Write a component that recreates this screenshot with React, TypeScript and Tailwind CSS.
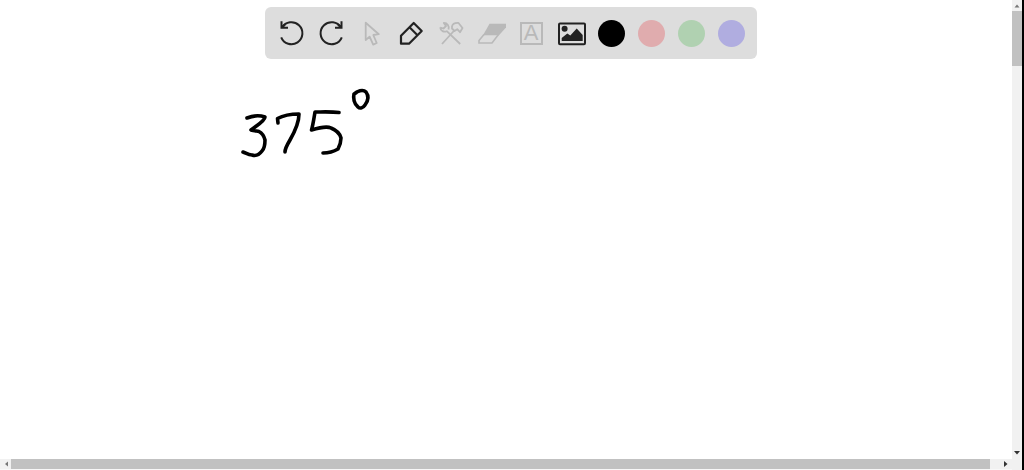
import React from 'react';

type ToolProps = {
  label: string;
  disabled?: boolean;
  children: React.ReactNode;
};

const Tool: React.FC<ToolProps> = ({ label, disabled, children }) => (
  <button
    type="button"
    aria-label={label}
    disabled={disabled}
    className="flex h-10 w-10 items-center justify-center text-[#222222] disabled:text-[#b9b9b9]"
  >
    {children}
  </button>
);

const Icon: React.FC<{ children: React.ReactNode }> = ({ children }) => (
  <svg
    viewBox="0 0 28 28"
    className="h-7 w-7 overflow-visible"
    fill="none"
    stroke="currentColor"
    strokeWidth="2"
    aria-hidden="true"
  >
    {children}
  </svg>
);

const colors = [
  { name: 'Black', swatch: 'bg-black' },
  { name: 'Red', swatch: 'bg-[#e0acae]' },
  { name: 'Green', swatch: 'bg-[#b0d1b1]' },
  { name: 'Blue', swatch: 'bg-[#b0ade0]' },
];

const Toolbar: React.FC = () => (
  <div role="toolbar" aria-label="Whiteboard tools" className="flex rounded-md bg-[#dddddd] p-1.5">
    <Tool label="Undo">
      <Icon>
        <path d="M4.2 18.3A11 11 0 1 0 5 8.5" />
        <path d="M4.5 2.3V8.8H11M4.5 8.8L8 5.5" />
      </Icon>
    </Tool>
    <Tool label="Redo">
      <Icon>
        <path d="M24.8 18.3A11 11 0 1 1 24 8.5" />
        <path d="M24.5 2.3V8.8H18M24.5 8.8L21 5.5" />
      </Icon>
    </Tool>
    <Tool label="Select" disabled>
      <Icon>
        <path
          d="M8.7 3.7V21L12.6 17.6L16.2 25.6L19.7 24L16.3 16L21.8 15.2Z"
          strokeWidth="1.8"
          strokeLinejoin="round"
        />
      </Icon>
    </Tool>
    <Tool label="Pen">
      <Icon>
        <path d="M16.7 4L24.7 12L12 24.7H4V16.7Z" strokeWidth="2.2" strokeLinejoin="round" />
        <path d="M12.5 8.3L20.5 16.3" strokeWidth="2.2" />
      </Icon>
    </Tool>
    <Tool label="Tools" disabled>
      <Icon>
        <path
          d="M3.2 8.5C3.5 12 7 13.5 9.8 12.2L23.2 25M11.5 10.5C12.5 7 10.5 4 6.8 4L9 7L6.5 9.5L3.2 8.5"
          strokeWidth="1.8"
          strokeLinejoin="round"
        />
        <path
          d="M15 7.5C15.5 5 18 3.8 21.5 4L25.5 9L23 13.2L20.2 10.2L17.5 12L15 9.5ZM16.8 12L5 25"
          strokeWidth="1.8"
          strokeLinejoin="round"
        />
      </Icon>
    </Tool>
    <Tool label="Eraser" disabled>
      <Icon>
        <path d="M12.5 4.8H29V8.5L22 16.2H6Z" fill="currentColor" stroke="none" />
        <path d="M7 15.5L2 21.5V24H15L21.5 15.5" strokeWidth="1.6" />
      </Icon>
    </Tool>
    <Tool label="Text" disabled>
      <span className="flex h-[23px] w-[23px] items-center justify-center border-2 border-current font-['Liberation_Sans',sans-serif] text-[22px] leading-none">
        A
      </span>
    </Tool>
    <Tool label="Insert image">
      <Icon>
        <rect x="2" y="4.6" width="26" height="20.6" rx="1" />
        <circle cx="7.6" cy="9.8" r="3" fill="currentColor" stroke="none" />
        <path d="M4.7 22V19L10.3 14.5L13.3 16.5L19.7 9.5L25.7 16V22Z" fill="currentColor" stroke="none" />
      </Icon>
    </Tool>
    {colors.map((color) => (
      <Tool key={color.name} label={color.name}>
        <span className={`h-[27px] w-[27px] rounded-full ${color.swatch}`} />
      </Tool>
    ))}
  </div>
);

// pen strokes on the board, in board coordinates
const strokes = [
  'M247 118C252 116 259 115 265 117C265 121 256 126 251 130C254 131 257 131 259 131.5C262 133 264 136 265 140C265 145 264 149 262 151C259 155 255 156 252 155C248 155 246 153 243 152',
  'M278 123L277.5 118.5C284 115 292 114 299 114C299 122 294 133 290 140C287 145 285 149 285 152',
  'M339 112.5C331 111.5 322 112 315 112C314 118 313 125 311.5 130C318 128 327 126 331 128C336 130 340 134 341 138C341 142 339 147 338 149C333 152 328 153 323 153',
  'M354 94C357 91 363 89 366 92C369 96 368 101 365 105C363 108 360 109 358 107C354 104 353 98 354 94L356 93',
];

const Board: React.FC = () => (
  <svg
    role="img"
    aria-label="375°"
    className="min-h-0 w-full flex-1"
    fill="none"
    stroke="black"
    strokeWidth="3.6"
    strokeLinecap="round"
    strokeLinejoin="round"
  >
    {strokes.map((d) => (
      <path key={d} d={d} />
    ))}
  </svg>
);

const Arrow: React.FC<{ d: string; label: string; className: string }> = ({ d, label, className }) => (
  <button type="button" aria-label={label} className={`flex shrink-0 items-center justify-center ${className}`}>
    <svg viewBox="0 0 6 6" className="h-1.5 w-1.5" fill="currentColor" aria-hidden="true">
      <path d={d} />
    </svg>
  </button>
);

const App: React.FC = () => {
  return (
    <div className="relative flex h-screen border-r-2 border-black bg-white">
      <main className="flex min-w-0 flex-1 flex-col">
        <Board />
        <div className="flex h-[11px] shrink-0 border-b border-[#f8f8f8] bg-[#f1f1f1]">
          <Arrow label="Scroll left" d="M5 0.5V5.5L2 3Z" className="w-[11px] text-[#777777]" />
          <div className="flex-1">
            <div className="h-full w-full bg-[#c1c1c1]" />
          </div>
          <div className="w-2.5" />
          <Arrow label="Scroll right" d="M1 0V6L4.5 3Z" className="w-3 text-[#333333]" />
        </div>
      </main>
      <div className="flex w-2.5 shrink-0 flex-col bg-[#f1f1f1] pb-3">
        <Arrow label="Scroll up" d="M0.5 4.5H5.5L3 1.5Z" className="h-[11px] text-[#777777]" />
        <div className="flex-1">
          <div className="h-1/8 w-full bg-[#c1c1c1]" />
        </div>
        <Arrow label="Scroll down" d="M0 1H6L3 4.5Z" className="h-[11px] text-[#333333]" />
      </div>
      <header className="absolute inset-x-0 top-[7px] flex justify-center">
        <Toolbar />
      </header>
    </div>
  );
};

export default App;
